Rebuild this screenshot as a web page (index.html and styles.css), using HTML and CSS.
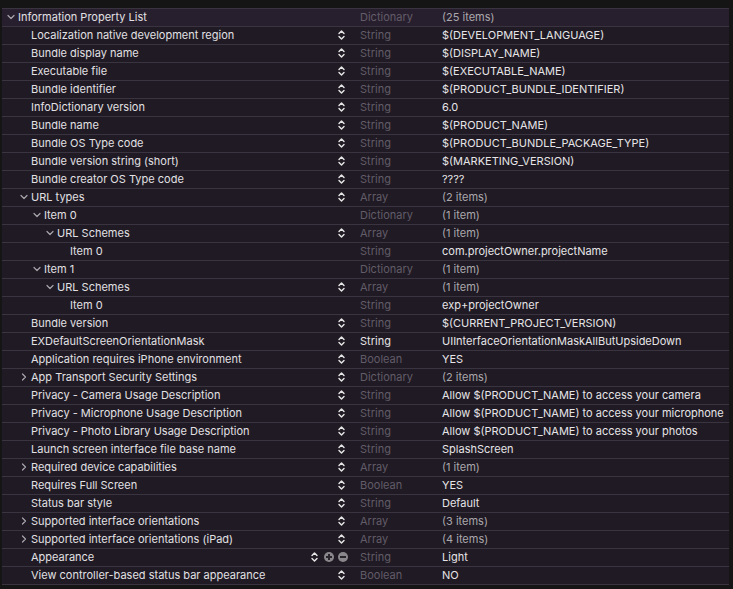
FILE: index.html
```html
<!DOCTYPE html>
<html>
<head>
<meta charset="utf-8">
<link rel="stylesheet" href="styles.css">
</head>
<body>
<svg width="0" height="0" class="defs">
  <defs>
    <symbol id="step" viewBox="0 0 7 12">
      <path d="M1 4.6 L3.5 2 L6 4.6 M1 7.4 L3.5 10 L6 7.4" fill="none" stroke="#e6e6e6" stroke-width="1.4" stroke-linecap="round" stroke-linejoin="round"/>
    </symbol>
    <symbol id="down" viewBox="0 0 8 8">
      <path d="M1 2.5 L4 5.5 L7 2.5" fill="none" stroke="#a9a6ad" stroke-width="1.2" stroke-linecap="round" stroke-linejoin="round"/>
    </symbol>
    <symbol id="right" viewBox="0 0 8 8">
      <path d="M2.5 1 L5.5 4 L2.5 7" fill="none" stroke="#a9a6ad" stroke-width="1.2" stroke-linecap="round" stroke-linejoin="round"/>
    </symbol>
  </defs>
</svg>
<div class="outline">
  <div class="row sel l0"><span class="key"><svg class="disc"><use href="#down"/></svg>Information Property List</span><span class="ctl"></span><span class="type">Dictionary</span><span class="val cnt">(25 items)</span></div>
  <div class="row l1"><span class="key">Localization native development region</span><span class="ctl"><svg class="st"><use href="#step"/></svg></span><span class="type">String</span><span class="val">$(DEVELOPMENT_LANGUAGE)</span></div>
  <div class="row l1"><span class="key">Bundle display name</span><span class="ctl"><svg class="st"><use href="#step"/></svg></span><span class="type">String</span><span class="val">$(DISPLAY_NAME)</span></div>
  <div class="row l1"><span class="key">Executable file</span><span class="ctl"><svg class="st"><use href="#step"/></svg></span><span class="type">String</span><span class="val">$(EXECUTABLE_NAME)</span></div>
  <div class="row l1"><span class="key">Bundle identifier</span><span class="ctl"><svg class="st"><use href="#step"/></svg></span><span class="type">String</span><span class="val">$(PRODUCT_BUNDLE_IDENTIFIER)</span></div>
  <div class="row l1"><span class="key">InfoDictionary version</span><span class="ctl"><svg class="st"><use href="#step"/></svg></span><span class="type">String</span><span class="val">6.0</span></div>
  <div class="row l1"><span class="key">Bundle name</span><span class="ctl"><svg class="st"><use href="#step"/></svg></span><span class="type">String</span><span class="val">$(PRODUCT_NAME)</span></div>
  <div class="row l1"><span class="key">Bundle OS Type code</span><span class="ctl"><svg class="st"><use href="#step"/></svg></span><span class="type">String</span><span class="val">$(PRODUCT_BUNDLE_PACKAGE_TYPE)</span></div>
  <div class="row l1"><span class="key">Bundle version string (short)</span><span class="ctl"><svg class="st"><use href="#step"/></svg></span><span class="type">String</span><span class="val">$(MARKETING_VERSION)</span></div>
  <div class="row l1"><span class="key">Bundle creator OS Type code</span><span class="ctl"><svg class="st"><use href="#step"/></svg></span><span class="type">String</span><span class="val">????</span></div>
  <div class="row l1"><span class="key"><svg class="disc"><use href="#down"/></svg>URL types</span><span class="ctl"><svg class="st"><use href="#step"/></svg></span><span class="type">Array</span><span class="val cnt">(2 items)</span></div>
  <div class="row l2"><span class="key"><svg class="disc"><use href="#down"/></svg>Item 0</span><span class="ctl"></span><span class="type">Dictionary</span><span class="val cnt">(1 item)</span></div>
  <div class="row l3"><span class="key"><svg class="disc"><use href="#down"/></svg>URL Schemes</span><span class="ctl"><svg class="st"><use href="#step"/></svg></span><span class="type">Array</span><span class="val cnt">(1 item)</span></div>
  <div class="row l4"><span class="key">Item 0</span><span class="ctl"></span><span class="type">String</span><span class="val">com.projectOwner.projectName</span></div>
  <div class="row l2"><span class="key"><svg class="disc"><use href="#down"/></svg>Item 1</span><span class="ctl"></span><span class="type">Dictionary</span><span class="val cnt">(1 item)</span></div>
  <div class="row l3"><span class="key"><svg class="disc"><use href="#down"/></svg>URL Schemes</span><span class="ctl"><svg class="st"><use href="#step"/></svg></span><span class="type">Array</span><span class="val cnt">(1 item)</span></div>
  <div class="row l4"><span class="key">Item 0</span><span class="ctl"></span><span class="type">String</span><span class="val">exp+projectOwner</span></div>
  <div class="row l1"><span class="key">Bundle version</span><span class="ctl"><svg class="st"><use href="#step"/></svg></span><span class="type">String</span><span class="val">$(CURRENT_PROJECT_VERSION)</span></div>
  <div class="row l1"><span class="key">EXDefaultScreenOrientationMask</span><span class="ctl"><svg class="st"><use href="#step"/></svg></span><span class="type bright">String</span><span class="val">UIInterfaceOrientationMaskAllButUpsideDown</span></div>
  <div class="row l1"><span class="key">Application requires iPhone environment</span><span class="ctl"><svg class="st"><use href="#step"/></svg></span><span class="type">Boolean</span><span class="val">YES</span></div>
  <div class="row l1"><span class="key"><svg class="disc"><use href="#right"/></svg>App Transport Security Settings</span><span class="ctl"><svg class="st"><use href="#step"/></svg></span><span class="type">Dictionary</span><span class="val cnt">(2 items)</span></div>
  <div class="row l1"><span class="key">Privacy - Camera Usage Description</span><span class="ctl"><svg class="st"><use href="#step"/></svg></span><span class="type">String</span><span class="val">Allow $(PRODUCT_NAME) to access your camera</span></div>
  <div class="row l1"><span class="key">Privacy - Microphone Usage Description</span><span class="ctl"><svg class="st"><use href="#step"/></svg></span><span class="type">String</span><span class="val">Allow $(PRODUCT_NAME) to access your microphone</span></div>
  <div class="row l1"><span class="key">Privacy - Photo Library Usage Description</span><span class="ctl"><svg class="st"><use href="#step"/></svg></span><span class="type">String</span><span class="val">Allow $(PRODUCT_NAME) to access your photos</span></div>
  <div class="row l1"><span class="key">Launch screen interface file base name</span><span class="ctl"><svg class="st"><use href="#step"/></svg></span><span class="type">String</span><span class="val">SplashScreen</span></div>
  <div class="row l1"><span class="key"><svg class="disc"><use href="#right"/></svg>Required device capabilities</span><span class="ctl"><svg class="st"><use href="#step"/></svg></span><span class="type">Array</span><span class="val cnt">(1 item)</span></div>
  <div class="row l1"><span class="key">Requires Full Screen</span><span class="ctl"><svg class="st"><use href="#step"/></svg></span><span class="type">Boolean</span><span class="val">YES</span></div>
  <div class="row l1"><span class="key">Status bar style</span><span class="ctl"><svg class="st"><use href="#step"/></svg></span><span class="type">String</span><span class="val">Default</span></div>
  <div class="row l1"><span class="key"><svg class="disc"><use href="#right"/></svg>Supported interface orientations</span><span class="ctl"><svg class="st"><use href="#step"/></svg></span><span class="type">Array</span><span class="val cnt">(3 items)</span></div>
  <div class="row l1"><span class="key"><svg class="disc"><use href="#right"/></svg>Supported interface orientations (iPad)</span><span class="ctl"><svg class="st"><use href="#step"/></svg></span><span class="type">Array</span><span class="val cnt">(4 items)</span></div>
  <div class="row l1"><span class="key">Appearance</span><span class="ctl hover"><svg class="st"><use href="#step"/></svg><span class="btn plus"></span><span class="btn minus"></span></span><span class="type">String</span><span class="val">Light</span></div>
  <div class="row l1"><span class="key">View controller-based status bar appearance</span><span class="ctl"><svg class="st"><use href="#step"/></svg></span><span class="type">Boolean</span><span class="val">NO</span></div>
</div>
</body>
</html>
```
FILE: styles.css
```css
html, body {
  margin: 0;
  padding: 0;
  background: #161516;
  height: 100%;
}
body {
  padding: 8px 4px 0 2px;
  box-sizing: border-box;
  font-family: "Inter", "Liberation Sans", sans-serif;
  font-size: 11px;
  color: #e2e0e3;
  overflow: hidden;
}
.defs { position: absolute; }
.outline {
  background: #1f1a23;
  border-top: 1px solid #3a3340;
}
.row {
  display: grid;
  grid-template-columns: 298px 60px 82px 1fr;
  height: 16px;
  padding-bottom: 1px;
  border-bottom: 1px solid #3a3340;
  align-items: center;
  white-space: nowrap;
}
.row.sel { background: #281f2e; }
.key {
  display: flex;
  align-items: center;
  overflow: visible;
}
.l0 .key { padding-left: 16px; }
.l1 .key { padding-left: 29px; }
.l2 .key { padding-left: 42px; }
.l3 .key { padding-left: 55px; }
.l4 .key { padding-left: 68px; }
.disc {
  width: 8px;
  height: 8px;
  margin-left: -11px;
  margin-right: 3px;
}
.ctl {
  display: flex;
  justify-content: flex-end;
  align-items: center;
  padding-right: 15px;
  height: 16px;
}
.st { width: 7px; height: 12px; }
.ctl.hover { padding-right: 12px; }
.btn {
  width: 10px;
  height: 10px;
  border-radius: 50%;
  background: #8a878c;
  position: relative;
  margin-left: 4px;
}
.ctl.hover .plus { margin-left: 6px; }
.btn::before {
  content: "";
  position: absolute;
  left: 2px;
  top: 4px;
  width: 6px;
  height: 2px;
  background: #2a252d;
}
.plus::after {
  content: "";
  position: absolute;
  left: 4px;
  top: 2px;
  width: 2px;
  height: 6px;
  background: #2a252d;
}
.type { color: #625c68; }
.type.bright { color: #e6e4e7; }
.val { color: #e6e4e7; }
.val.cnt { color: #aba8ad; }
```
